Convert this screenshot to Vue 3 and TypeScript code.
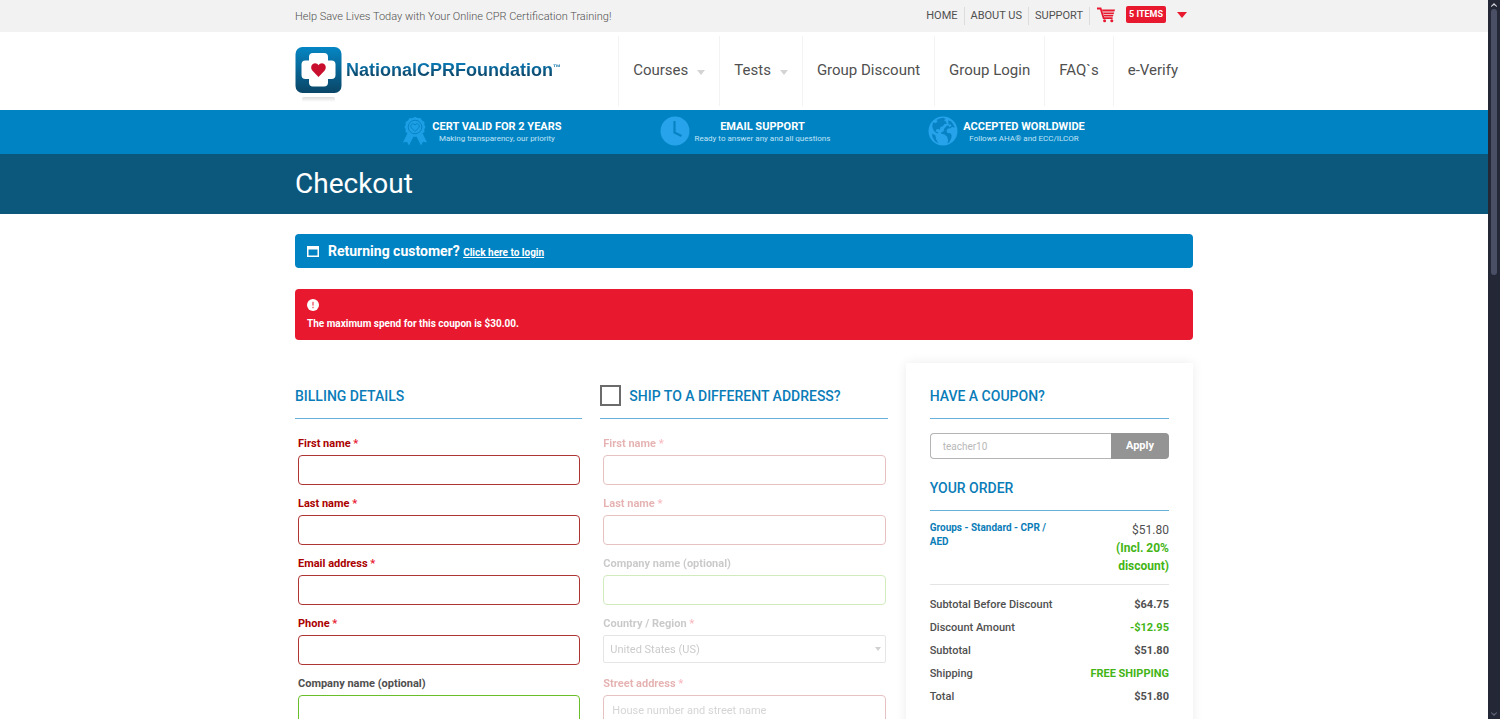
<script setup lang="ts">
import { ref } from 'vue'

interface Field {
  id: string
  label: string
  required?: boolean
  state: 'invalid' | 'valid' | 'plain'
  kind?: 'select'
  placeholder?: string
}

interface Total {
  label: string
  value: string
  green?: boolean
}

const topLinks: string[] = ['HOME', 'ABOUT US', 'SUPPORT']

const navItems: { label: string; menu?: boolean }[] = [
  { label: 'Courses', menu: true },
  { label: 'Tests', menu: true },
  { label: 'Group Discount' },
  { label: 'Group Login' },
  { label: 'FAQ`s' },
  { label: 'e-Verify' },
]

const billing: Field[] = [
  { id: 'b-first', label: 'First name', required: true, state: 'invalid' },
  { id: 'b-last', label: 'Last name', required: true, state: 'invalid' },
  { id: 'b-email', label: 'Email address', required: true, state: 'invalid' },
  { id: 'b-phone', label: 'Phone', required: true, state: 'invalid' },
  { id: 'b-company', label: 'Company name (optional)', state: 'valid' },
]

const shipping: Field[] = [
  { id: 's-first', label: 'First name', required: true, state: 'invalid' },
  { id: 's-last', label: 'Last name', required: true, state: 'invalid' },
  { id: 's-company', label: 'Company name (optional)', state: 'valid' },
  { id: 's-country', label: 'Country / Region', required: true, state: 'plain', kind: 'select' },
  { id: 's-street', label: 'Street address', required: true, state: 'invalid', placeholder: 'House number and street name' },
]

const totals: Total[] = [
  { label: 'Subtotal Before Discount', value: '$64.75' },
  { label: 'Discount Amount', value: '-$12.95', green: true },
  { label: 'Subtotal', value: '$51.80' },
  { label: 'Shipping', value: 'FREE SHIPPING', green: true },
  { label: 'Total', value: '$51.80' },
]

const shipElsewhere = ref(false)
const coupon = ref('')
</script>

<template>
  <div class="shell">
    <div class="page">
      <div class="topbar">
        <div class="container topbar-row">
          <p class="tagline">Help Save Lives Today with Your Online CPR Certification Training!</p>
          <nav class="top-links" aria-label="Secondary">
            <a v-for="link in topLinks" :key="link" href="#">{{ link }}</a>
          </nav>
          <a class="cart" href="#" aria-label="Cart">
            <svg width="20" height="16" viewBox="0 0 20 16">
              <path d="M1 1.5h3.6l3 9.6h9" fill="none" stroke="#e8182f" stroke-width="1.8" />
              <path d="M6 2.6h13l-.6 1.9H6.6zM7 5.4h11.2l-.6 1.8H7.5zM7.8 8h9.6l-.5 1.6H8.3z" fill="#e8182f" />
              <circle cx="8.6" cy="13.8" r="1.5" fill="#e8182f" />
              <circle cx="15.8" cy="13.8" r="1.5" fill="#e8182f" />
            </svg>
            <span class="count">5 ITEMS</span>
            <span class="cart-arrow"></span>
          </a>
        </div>
      </div>

      <header class="container header">
        <a class="logo" href="#">
          <svg class="mark" width="47" height="58" viewBox="0 0 47 58">
            <defs>
              <linearGradient id="tile" x1="0" y1="0" x2="0" y2="1">
                <stop offset="0" stop-color="#0586c4" />
                <stop offset="1" stop-color="#0a4566" />
              </linearGradient>
              <linearGradient id="floor" x1="0" y1="0" x2="0" y2="1">
                <stop offset="0" stop-color="#dedede" />
                <stop offset="1" stop-color="#ffffff" />
              </linearGradient>
            </defs>
            <rect x="0.5" y="1" width="46" height="46" rx="7" fill="url(#tile)" />
            <path d="M18 7h11a4 4 0 0 1 4 4v3.500h3.500a4 4 0 0 1 4 4v10.500a4 4 0 0 1-4 4H33v3.500a4 4 0 0 1-4 4H18a4 4 0 0 1-4-4V33h-3.500a4 4 0 0 1-4-4V18.500a4 4 0 0 1 4-4H14V11a4 4 0 0 1 4-4z" fill="#fff" />
            <path d="M23.500 31l-6-6.200c-3.400-3.800.4-9.400 4.600-7 .7.400 1.100.9 1.400 1.400.3-.5.700-1 1.400-1.400 4.200-2.400 8 3.200 4.600 7z" fill="#c8102e" />
            <rect x="7" y="51" width="33" height="5" rx="2" fill="url(#floor)" />
          </svg>
          <span class="wordmark">NationalCPRFoundation<sup>™</sup></span>
        </a>
        <nav class="main-nav" aria-label="Main">
          <a v-for="item in navItems" :key="item.label" href="#">
            {{ item.label }}<span v-if="item.menu" class="caret"></span>
          </a>
        </nav>
      </header>

      <section class="perks">
        <div class="perk">
          <svg width="24" height="30" viewBox="0 0 24 30">
            <path d="M5 16L0 26.500l4-.7L6 29.500l5.500-11h1l5.500 11 2-3.700 4 .7-5-10.500z" fill="#1d9fe6" />
            <path d="M12 .8l2.600 1.300 2.900-.2 1.500 2.500 2.500 1.500-.2 2.900L22.500 11l-1.200 2.200.2 2.900-2.500 1.500-1.500 2.500-2.900-.2L12 21l-2.600-1.100-2.900.2L5 17.600l-2.500-1.500.2-2.900L1.500 11l1.200-2-.2-2.900L5 4.600l1.500-2.500 2.900.2z" fill="#1d9fe6" />
            <circle cx="12" cy="11" r="6.800" fill="none" stroke="#0783c5" stroke-width="1" />
            <path d="M12 15.500l-3.600-3.700C6.600 9.700 8.800 6.800 11 8.100l1 .9 1-.9c2.200-1.300 4.400 1.600 2.600 3.700z" fill="none" stroke="#0783c5" stroke-width="1" />
          </svg>
          <div class="perk-text"><strong>CERT VALID FOR 2 YEARS</strong><span>Making transparency, our priority</span></div>
        </div>
        <div class="perk">
          <svg width="30" height="30" viewBox="0 0 30 30">
            <circle cx="15" cy="15" r="14.500" fill="#26a3ea" />
            <path d="M14.500 5v11.500l7 3.500" fill="none" stroke="#0783c5" stroke-width="2.200" />
          </svg>
          <div class="perk-text"><strong>EMAIL SUPPORT</strong><span>Ready to answer any and all questions</span></div>
        </div>
        <div class="perk">
          <svg width="30" height="30" viewBox="0 0 30 30">
            <circle cx="15" cy="15" r="14.500" fill="#26a3ea" />
            <path d="M11.500 2.500l4-.8 2 1.300-1.500 1.300 1.800 1.200 1.200 2.200-2.500.3-1.500 2-2.700 1.300-.5 2.500-1.600-.8-2 .6-.4 1.900 1.700.5 1 1.600-2.300-.6-2.600-2.500-1.400-4L5 6.600l3 .4 1.500-1.800L8.500 4z" fill="#0783c5" />
            <path d="M20 4.500l3 .8 2 2.700 1.800 3.500-2.800-.5-1.500 1.200-2.500.3-1.500 2 1 2.500 3 .3 1.200 2.200-.5 3-1.700 3.500-2 1.500.5-3.500-1-3.500-2.500-2-3.500-1 .5-1.500 2-.5.5-2.500 2.500-3 2.500-1-.5-2z" fill="#0783c5" />
            <path d="M4 17.500l3.500 2 .5 3.500 2.500 4.500-3.500-2.200-2.500-4z" fill="#0783c5" />
            <path d="M20 9l2.500-.8 1 1.800-2 1z" fill="#26a3ea" />
          </svg>
          <div class="perk-text"><strong>ACCEPTED WORLDWIDE</strong><span>Follows AHA® and ECC/ILCOR</span></div>
        </div>
      </section>

      <div class="title-band">
        <div class="container"><h1>Checkout</h1></div>
      </div>

      <main class="container">
        <div class="notice info">
          <svg width="12" height="11" viewBox="0 0 12 11">
            <path d="M0 0h12v11H0zM1.500 3.500v6h9v-6z" fill="#fff" fill-rule="evenodd" />
          </svg>
          <p>Returning customer? <a href="#">Click here to login</a></p>
        </div>

        <div class="notice error" role="alert">
          <svg width="12" height="12" viewBox="0 0 12 12">
            <circle cx="6" cy="6" r="6" fill="#fff" />
            <path d="M6 2.800v3.800M6 7.800v1.400" stroke="#e8182f" stroke-width="1" />
          </svg>
          <p>The maximum spend for this coupon is $30.00.</p>
        </div>

        <div class="columns">
          <form class="column">
            <h2>BILLING DETAILS</h2>
            <div class="fields">
              <div v-for="f in billing" :key="f.id" class="field" :class="f.state">
                <label :for="f.id">{{ f.label }} <em v-if="f.required">*</em></label>
                <input :id="f.id" type="text" />
              </div>
            </div>
          </form>

          <form class="column">
            <h2 class="ship-title">
              <input id="ship-elsewhere" v-model="shipElsewhere" type="checkbox" />
              <label for="ship-elsewhere">SHIP TO A DIFFERENT ADDRESS?</label>
            </h2>
            <div class="fields" :class="{ faded: !shipElsewhere }">
              <div v-for="f in shipping" :key="f.id" class="field" :class="f.state">
                <label :for="f.id">{{ f.label }} <em v-if="f.required">*</em></label>
                <div v-if="f.kind === 'select'" class="select-box">
                  <select :id="f.id">
                    <option>United States (US)</option>
                  </select>
                </div>
                <input v-else :id="f.id" type="text" :placeholder="f.placeholder" />
              </div>
            </div>
          </form>

          <aside class="card">
            <h2>HAVE A COUPON?</h2>
            <form class="coupon">
              <input v-model="coupon" type="text" placeholder="teacher10" aria-label="Coupon code" />
              <button type="button">Apply</button>
            </form>
            <h2 class="order-title">YOUR ORDER</h2>
            <table>
              <tbody>
                <tr class="product">
                  <th scope="row">Groups - Standard - CPR / AED</th>
                  <td>$51.80 <b>(Incl. 20% discount)</b></td>
                </tr>
              </tbody>
              <tbody class="totals">
                <tr v-for="t in totals" :key="t.label">
                  <th scope="row">{{ t.label }}</th>
                  <td :class="{ green: t.green }">{{ t.value }}</td>
                </tr>
              </tbody>
            </table>
          </aside>
        </div>
      </main>
    </div>

    <div class="scrollbar" aria-hidden="true">
      <svg width="6" height="4" viewBox="0 0 6 4"><path d="M0 4V3l3-3 3 3v1L3 2z" fill="#d5d6de" /></svg>
      <div class="track"><div class="thumb"></div></div>
      <svg width="6" height="4" viewBox="0 0 6 4"><path d="M0 0v1l3 3 3-3V0L3 2z" fill="#5d6072" /></svg>
    </div>
  </div>
</template>

<style>
body {
  margin: 0;
  background: #fff;
}
</style>

<style scoped>
* {
  box-sizing: border-box;
}

.shell {
  display: flex;
  height: 100vh;
  font-family: Roboto, "Liberation Sans", sans-serif;
  font-size: 12px;
  color: #505050;
}

.page {
  flex: 1;
  min-width: 0;
  overflow-x: hidden;
  overflow-y: auto;
  scrollbar-width: none;
}

.container {
  width: 100%;
  max-width: 898px;
  margin: 0 auto;
}

a {
  color: inherit;
  text-decoration: none;
}

p,
h1,
h2 {
  margin: 0;
}

.topbar {
  background: #f2f2f2;
}

.topbar-row {
  display: flex;
  align-items: center;
  height: 32px;
}

.tagline {
  flex: 1;
  font-size: 11px;
  font-weight: 300;
}

.top-links {
  display: flex;
}

.top-links a {
  padding: 0 6px;
  border-right: 1px solid #dcdcdc;
  font-size: 11px;
  line-height: 18px;
}

.cart {
  display: flex;
  align-items: center;
  padding: 0 6px 3px;
}

.count {
  margin: 0 11px 0 10px;
  padding: 0 3px;
  border-radius: 2px;
  background: #e8182f;
  color: #fff;
  font-size: 9px;
  font-weight: 700;
  line-height: 17px;
}

.cart-arrow {
  border: 5px solid transparent;
  border-top: 6px solid #e8182f;
  border-bottom: 0;
}

.header {
  display: flex;
  justify-content: space-between;
  height: 78px;
}

.logo {
  display: flex;
  align-items: flex-start;
  gap: 4px;
  padding-top: 14px;
}

.wordmark {
  padding-top: 14px;
  background: linear-gradient(#0b82c2 45%, #0b3a57 95%);
  background-clip: text;
  color: transparent;
  font-family: "Liberation Sans", Arial, sans-serif;
  font-size: 18px;
  font-weight: 700;
  line-height: 20px;
}

.wordmark sup {
  font-size: 8px;
  line-height: 8px;
  vertical-align: 6px;
}

.main-nav {
  display: flex;
  padding: 4px 0;
}

.main-nav a {
  display: flex;
  align-items: center;
  padding: 0 14px 2px;
  border-left: 1px solid #f3f3f3;
  font-size: 15px;
}

.main-nav a:last-child {
  padding-right: 15px;
}

.caret {
  margin: 4px 0 0 9px;
  border: 4px solid transparent;
  border-top: 5px solid #d4d4d4;
  border-bottom: 0;
}

.perks {
  display: flex;
  justify-content: center;
  gap: 98px;
  height: 44px;
  padding-top: 6px;
  background: #0083c3;
  color: #fff;
}

.perk {
  display: flex;
  gap: 5px;
}

.perk-text {
  display: flex;
  flex-direction: column;
  padding-top: 4px;
  text-align: center;
}

.perk-text strong {
  font-size: 11px;
  line-height: 13px;
}

.perk-text span {
  color: #c2e4f7;
  font-size: 8px;
  line-height: 12px;
}

.title-band {
  background: #0c587d;
  color: #fff;
}

h1 {
  font-size: 28px;
  font-weight: 400;
  line-height: 60px;
}

.notice {
  border-radius: 4px;
  color: #fff;
  font-weight: 700;
}

.info {
  display: flex;
  align-items: center;
  gap: 9px;
  height: 34px;
  margin-top: 20px;
  padding: 0 12px;
  background: #0083c3;
  font-size: 14px;
}

.info a {
  font-size: 10px;
  text-decoration: underline;
}

.error {
  margin-top: 21px;
  padding: 10px 12px;
  background: #e8182f;
  font-size: 10px;
  line-height: 13px;
}

.error svg {
  display: block;
  margin-bottom: 6px;
}

.columns {
  display: grid;
  grid-template-columns: repeat(3, 1fr);
  gap: 18px;
  margin-top: 23px;
}

h2 {
  padding: 23px 0 12px;
  border-bottom: 1px solid #67b0d9;
  color: #0a7cb8;
  font-size: 14px;
  font-weight: 500;
  line-height: 20px;
}

.ship-title {
  display: flex;
  align-items: center;
  gap: 8px;
  padding: 22px 0 12px;
}

.ship-title input {
  appearance: none;
  width: 21px;
  height: 21px;
  margin: 0;
  border: 2px solid #6b6b6b;
  background: #fff;
}

.ship-title input:checked {
  background: #0083c3;
}

.fields {
  margin-top: 18px;
}

.field {
  height: 60px;
  padding: 0 2px 0 3px;
}

.field label {
  display: block;
  margin-bottom: 4px;
  font-size: 11px;
  font-weight: 700;
  line-height: 14px;
}

.field em {
  color: #e8182f;
  font-style: normal;
}

.field > input {
  display: block;
  width: 100%;
  height: 30px;
  padding: 0 8px;
  border: 1px solid #aaa;
  border-radius: 4px;
  background: #fff;
  color: inherit;
  font-family: inherit;
  font-size: 11px;
}

.invalid label {
  color: #a00;
}

.field.invalid > input {
  border-color: #b03434;
}

.field.valid > input {
  border-color: #69bf29;
}

.faded {
  opacity: 0.3;
}

.select-box {
  display: flex;
  align-items: center;
  height: 28px;
  padding-right: 4px;
  border: 1px solid #aaa;
  border-radius: 2px;
}

.select-box::after {
  content: "";
  border: 3px solid transparent;
  border-top: 4px solid #666;
  border-bottom: 0;
}

.select-box select {
  appearance: none;
  flex: 1;
  height: 100%;
  padding: 0 6px;
  border: 0;
  background: transparent;
  color: inherit;
  font-family: inherit;
  font-size: 11px;
}

::placeholder {
  color: #757575;
  opacity: 1;
}

.card {
  padding: 0 24px 22px;
  border-radius: 2px;
  box-shadow: 0 0 12px rgba(0, 0, 0, 0.08);
}

.coupon {
  display: flex;
  height: 26px;
  margin-top: 14px;
}

.coupon input {
  flex: 1;
  min-width: 0;
  padding: 0 12px;
  border: 1px solid #b5b5b5;
  border-right: 0;
  border-radius: 4px 0 0 4px;
  font-family: inherit;
  font-size: 10px;
}

.coupon ::placeholder {
  color: #b8b8b8;
}

.coupon button {
  width: 58px;
  padding: 0 0 2px;
  border: 0;
  border-radius: 0 4px 4px 0;
  background: #949494;
  color: #fff;
  font-family: inherit;
  font-size: 11px;
  font-weight: 700;
}

.order-title {
  padding-top: 19px;
}

table {
  width: 100%;
  border-collapse: collapse;
}

th,
td {
  padding: 0;
  text-align: left;
  font-size: 11px;
  line-height: 18px;
  vertical-align: top;
}

td {
  text-align: right;
}

.product th {
  width: 130px;
  padding-top: 10px;
  color: #0a7cb8;
  font-size: 10px;
  line-height: 14px;
}

.product td {
  padding: 10px 0 9px 50px;
  font-size: 12px;
}

.product td b,
.green {
  color: #43b516;
}

.totals {
  border-top: 1px solid #e4e4e4;
}

.totals th {
  font-weight: 500;
}

.totals th,
.totals td {
  padding-top: 5px;
}

.totals tr:first-child > * {
  padding-top: 11px;
}

.totals td {
  font-weight: 700;
}

.scrollbar {
  display: flex;
  flex-direction: column;
  align-items: center;
  justify-content: space-between;
  width: 12px;
  padding: 3px 0;
  background: #242736;
}

.track {
  flex: 1;
  width: 6px;
  padding: 2px 0;
}

.thumb {
  height: 38%;
  border-radius: 3px;
  background: #4b4f66;
}
</style>
